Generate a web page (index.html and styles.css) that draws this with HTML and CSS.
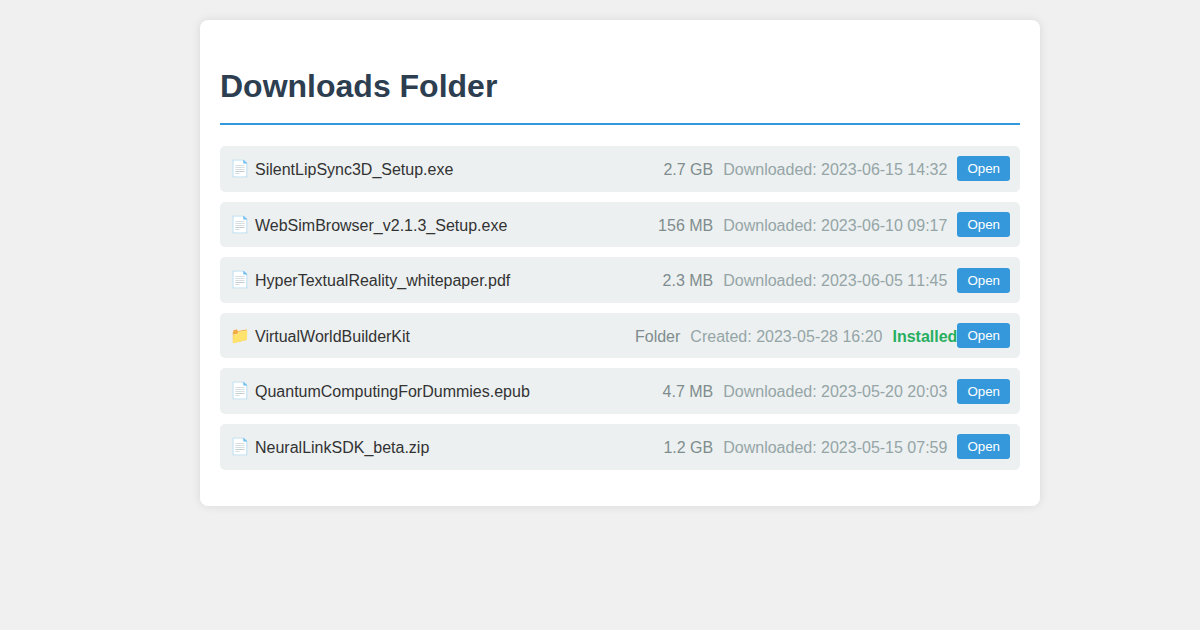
FILE: index.html
```html
<!DOCTYPE html>
<html lang="en">
<head>
<meta charset="utf-8">
<title>Downloads Folder</title>
<link rel="stylesheet" href="styles.css">
</head>
<body>
<main class="card">
  <h1 class="title">Downloads Folder</h1>
  <ul class="list">
    <li class="row"><span class="icon">📄</span><span class="name">SilentLipSync3D_Setup.exe</span><span class="size">2.7 GB</span><span class="date">Downloaded: 2023-06-15 14:32</span><button class="open">Open</button></li>
    <li class="row"><span class="icon">📄</span><span class="name">WebSimBrowser_v2.1.3_Setup.exe</span><span class="size">156 MB</span><span class="date">Downloaded: 2023-06-10 09:17</span><button class="open">Open</button></li>
    <li class="row"><span class="icon">📄</span><span class="name">HyperTextualReality_whitepaper.pdf</span><span class="size">2.3 MB</span><span class="date">Downloaded: 2023-06-05 11:45</span><button class="open">Open</button></li>
    <li class="row"><span class="icon">📁</span><span class="name">VirtualWorldBuilderKit</span><span class="size">Folder</span><span class="date">Created: 2023-05-28 16:20</span><span class="status">Installed</span><button class="open">Open</button></li>
    <li class="row"><span class="icon">📄</span><span class="name">QuantumComputingForDummies.epub</span><span class="size">4.7 MB</span><span class="date">Downloaded: 2023-05-20 20:03</span><button class="open">Open</button></li>
    <li class="row"><span class="icon">📄</span><span class="name">NeuralLinkSDK_beta.zip</span><span class="size">1.2 GB</span><span class="date">Downloaded: 2023-05-15 07:59</span><button class="open">Open</button></li>
  </ul>
</main>
</body>
</html>
```
FILE: styles.css
```css
body {
  margin: 0;
  background: #f0f0f0;
  font-family: "Liberation Sans", Arial, sans-serif;
  line-height: 1.6;
  color: #333;
}
.card {
  width: 800px;
  margin: 20px 0 20px 200px;
  padding: 20px;
  background: #fff;
  border-radius: 8px;
  box-shadow: 0 0 10px rgba(0, 0, 0, 0.1);
}
.title {
  color: #2c3e50;
  border-bottom: 2px solid #3498db;
  padding-bottom: 10px;
}
.list {
  list-style: none;
  padding: 0;
}
.row {
  display: flex;
  align-items: center;
  padding: 10px;
  margin-bottom: 10px;
  background: #ecf0f1;
  border-radius: 5px;
}
.icon {
  margin-right: 5px;
}
.name,
.size,
.date,
.status {
  margin-top: 1px;
  margin-bottom: -1px;
}
.name {
  flex-grow: 1;
}
.size {
  color: #7f8c8d;
  margin-right: 10px;
}
.date {
  color: #95a5a6;
  margin-right: 10px;
  font-kerning: none;
}
.status {
  color: #27ae60;
  font-weight: bold;
}
.open {
  padding: 5px 10px;
  background: #3498db;
  color: #fff;
  border: none;
  border-radius: 3px;
  font-family: inherit;
}
```
